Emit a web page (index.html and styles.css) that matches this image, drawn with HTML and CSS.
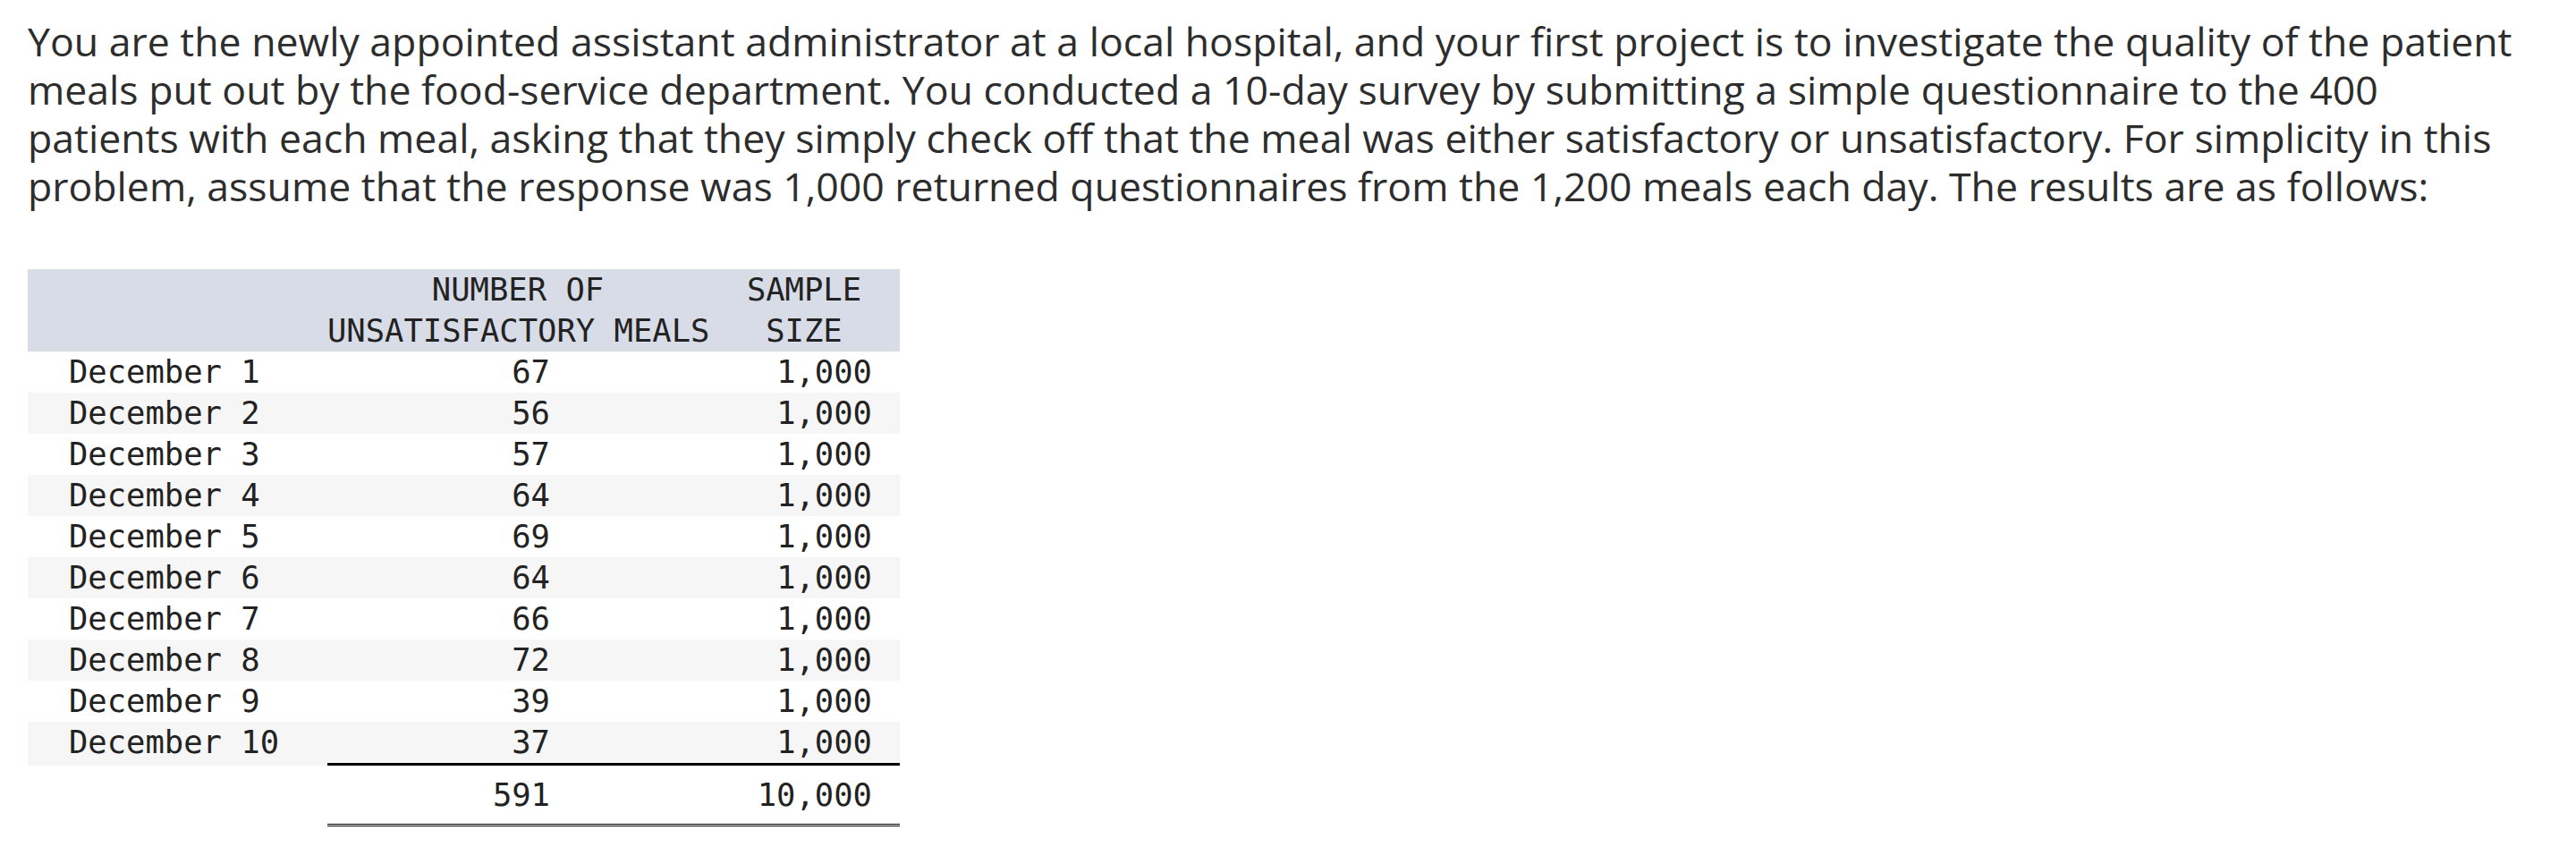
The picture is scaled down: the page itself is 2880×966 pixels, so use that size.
FILE: index.html
```html
<!DOCTYPE html>
<html lang="en">
<head>
<meta charset="utf-8">
<title>Patient meals survey</title>
<link rel="stylesheet" href="styles.css">
</head>
<body>
<main class="problem">
  <p class="intro">You are the newly appointed assistant administrator at a local hospital, and your first project is to investigate the quality of the patient meals put out by the food-service department. You conducted a 10-day survey by submitting a simple questionnaire to the 400 patients with each meal, asking that they simply check off that the meal was either satisfactory or unsatisfactory. For simplicity in this problem, assume that the response was 1,000 returned questionnaires from the 1,200 meals each day. The results are as follows:</p>
  <table class="data">
    <colgroup><col class="c1"><col class="c2"><col class="c3"></colgroup>
    <thead>
      <tr><th></th><th class="mid">NUMBER OF<br>UNSATISFACTORY MEALS</th><th class="mid">SAMPLE<br>SIZE</th></tr>
    </thead>
    <tbody>
      <tr><td class="day">December 1</td><td class="n2">67</td><td class="n3">1,000</td></tr>
      <tr><td class="day">December 2</td><td class="n2">56</td><td class="n3">1,000</td></tr>
      <tr><td class="day">December 3</td><td class="n2">57</td><td class="n3">1,000</td></tr>
      <tr><td class="day">December 4</td><td class="n2">64</td><td class="n3">1,000</td></tr>
      <tr><td class="day">December 5</td><td class="n2">69</td><td class="n3">1,000</td></tr>
      <tr><td class="day">December 6</td><td class="n2">64</td><td class="n3">1,000</td></tr>
      <tr><td class="day">December 7</td><td class="n2">66</td><td class="n3">1,000</td></tr>
      <tr><td class="day">December 8</td><td class="n2">72</td><td class="n3">1,000</td></tr>
      <tr><td class="day">December 9</td><td class="n2">39</td><td class="n3">1,000</td></tr>
      <tr><td class="day">December 10</td><td class="n2">37</td><td class="n3">1,000</td></tr>
      <tr class="total"><td class="blank"></td><td class="n2">591</td><td class="n3">10,000</td></tr>
    </tbody>
  </table>
</main>
</body>
</html>
```

FILE: styles.css
```css
html, body {
  margin: 0;
  padding: 0;
  background: #ffffff;
}

.problem {
  padding: 19px 31px 0 31px;
}

.intro {
  margin: 0;
  max-width: 2800px;
  font-family: "Open Sans", "Noto Sans", sans-serif;
  font-size: 44.6px;
  line-height: 54px;
  color: #2d2d2d;
}

.data {
  margin-top: 66px;
  border-collapse: separate;
  border-spacing: 0;
  table-layout: fixed;
  width: 975px;
  font-family: "DejaVu Sans Mono", "Liberation Mono", monospace;
  font-size: 35.5px;
  color: #222222;
}

.c1 { width: 335px; }
.c2 { width: 426px; }
.c3 { width: 214px; }

.data thead th {
  background: #d8dce6;
  font-weight: normal;
  padding: 0;
  line-height: 46px;
}

.data th.mid {
  text-align: center;
  white-space: nowrap;
}

.data td {
  padding: 0;
  line-height: 46px;
  white-space: nowrap;
}

.data tbody tr:nth-child(even) td {
  background: #f6f6f6;
}

.data td.day {
  padding-left: 46px;
  text-align: left;
}

.data td.n2 {
  text-align: right;
  padding-right: 177px;
}

.data td.n3 {
  text-align: right;
  padding-right: 31px;
}

.data tr.total td {
  background: #ffffff;
  line-height: 65px;
}

.data tr.total td.n2,
.data tr.total td.n3 {
  border-top: 3px solid #000000;
  border-bottom: 3px double #000000;
}

.data tr.total td.blank {
  border-top: 3px solid #f6f6f6;
}
```
